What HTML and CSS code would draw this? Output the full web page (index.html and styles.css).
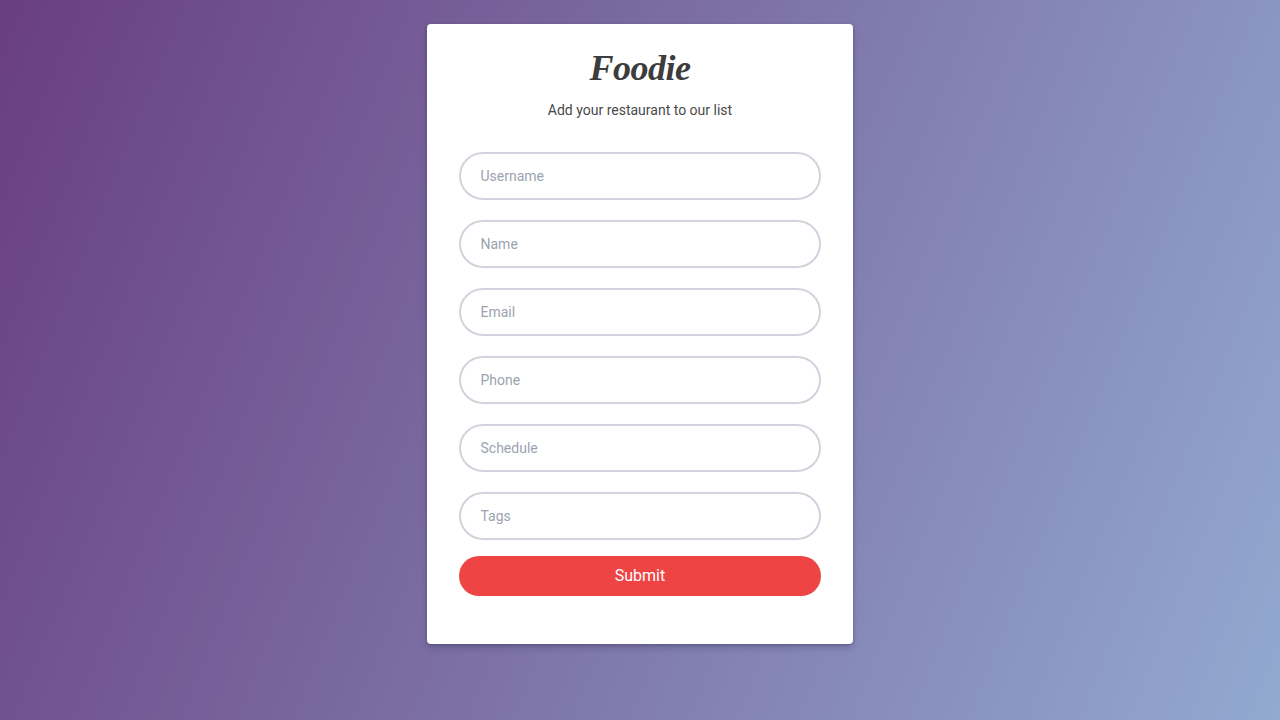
FILE: index.html
```html
<!DOCTYPE html>
<html lang="en">
<head>
    <meta charset="UTF-8">
    <meta name="viewport" content="width=device-width, initial-scale=1.0">
    <title>Foodie</title>
    <link rel="stylesheet" href="styles.css">
</head>
<body>

    <div class="card">
        <h1 class="logo">Foodie</h1>
        <p class="subtitle">Add your restaurant to our list</p>

        <form class="signup-form">
            <input type="text" class="field" placeholder="Username">
            <input type="text" class="field" placeholder="Name">
            <input type="text" class="field" placeholder="Email">
            <input type="text" class="field" placeholder="Phone">
            <input type="text" class="field" placeholder="Schedule">
            <input type="text" class="field" placeholder="Tags">
            <button type="submit" class="submit-button">Submit</button>
        </form>
    </div>

</body>
</html>
```

FILE: styles.css
```css
* {
    box-sizing: border-box;
}

html, body {
    height: 100%;
}

body {
    font-family: Roboto, sans-serif;
    background: linear-gradient(112deg, #693e81 0%, #92a9d0 100%);
    color: #4a4a4a;
    margin: 0;
    padding: 24px 0 0;
    overflow: hidden;
}

.card {
    width: 426px;
    height: 620px;
    margin: 0 auto;
    padding: 16px 32px 0;
    background-color: #fff;
    border-radius: 4px;
    box-shadow: 0 4px 6px rgba(50, 50, 93, 0.25), 0 1px 3px rgba(0, 0, 0, 0.2);
}

.logo {
    margin: 0;
    height: 56px;
    line-height: 56px;
    text-align: center;
    font-family: "Liberation Serif", cursive;
    font-size: 36px;
    font-weight: bold;
    font-style: italic;
    letter-spacing: -0.5px;
    color: #3d3d3d;
}

.subtitle {
    margin: 2px 0 0;
    height: 24px;
    line-height: 24px;
    text-align: center;
    font-size: 14px;
}

.signup-form {
    display: flex;
    flex-direction: column;
    gap: 20px;
    margin-top: 30px;
}

.field {
    display: block;
    width: 100%;
    height: 48px;
    padding: 0 19.5px;
    border: 2.5px solid #d1d3dd;
    border-radius: 24px;
    outline: none;
    font-family: Roboto, sans-serif;
    font-size: 14px;
    color: #4a4a4a;
}

.field::placeholder {
    color: #9ca3af;
    opacity: 1;
}

.submit-button {
    display: block;
    width: 100%;
    height: 40px;
    margin-top: -4px;
    padding: 0 0 1px;
    border: none;
    border-radius: 20px;
    background-color: #ef4444;
    color: #fff;
    font-family: Roboto, sans-serif;
    font-size: 16px;
    cursor: pointer;
}
```
